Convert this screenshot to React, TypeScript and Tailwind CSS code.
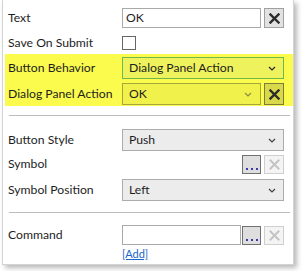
import React from "react";

const XIcon = ({ color = "#2b2b2b", w = 2.4 }: { color?: string; w?: number }) => (
  <svg width="11" height="11" viewBox="0 0 11 11">
    <path d="M1.5 1.5 L9.5 9.5 M9.5 1.5 L1.5 9.5" stroke={color} strokeWidth={w} strokeLinecap="square" />
  </svg>
);

const Chevron = ({ color = "#404040" }: { color?: string }) => (
  <svg width="8" height="5" viewBox="0 0 8 5">
    <path d="M1 1 L4 4 L7 1" stroke={color} strokeWidth="1.2" fill="none" />
  </svg>
);

const Dots = () => (
  <div className="w-[19px] h-[19px] border border-[#707070] bg-[#dedede] flex items-end justify-center pb-[3px] gap-[3px]">
    <span className="w-[2px] h-[2px] bg-[#3a3aa8]" />
    <span className="w-[2px] h-[2px] bg-[#3a3aa8]" />
    <span className="w-[2px] h-[2px] bg-[#3a3aa8]" />
  </div>
);

const DisabledX = () => (
  <div className="w-[20px] h-[19px] border border-[#cfcfcf] bg-[#f4f4f4] flex items-center justify-center">
    <XIcon color="#c4c4c4" w={2} />
  </div>
);

const Label = ({ children }: { children: React.ReactNode }) => (
  <div className="w-[119px] pl-[5px] shrink-0 leading-none">{children}</div>
);

export default function App() {
  return (
    <div
      className="w-[305px] h-[271px] bg-white text-[12.2px] text-[#1e1e1e] overflow-hidden"
      style={{ fontFamily: 'Lato, "Noto Sans", sans-serif' }}
    >
      <div className="ml-[2px] w-[292px] h-[265px] border-l border-r border-b border-[#d4d4d4] bg-white shadow-[3px_3px_5px_rgba(0,0,0,0.28)] pt-[8px]">
        {/* Text */}
        <div className="flex items-center h-[20px]">
          <Label>Text</Label>
          <div className="w-[139px] h-[20px] border border-[#a9a9a9] bg-white flex items-center pl-[3px]">OK</div>
          <div className="ml-[3px] w-[20px] h-[20px] border border-[#a0a0a0] bg-[#e2e2e2] flex items-center justify-center">
            <XIcon />
          </div>
        </div>
        {/* Save On Submit */}
        <div className="flex items-center h-[20px] mt-[5px]">
          <Label>Save On Submit</Label>
          <div className="w-[14px] h-[14px] border border-[#666] bg-white" />
        </div>
        {/* Highlighted */}
        <div className="mt-[1px] ml-[2px] h-[52px] bg-[#fbfb4e] pt-[3px]">
          <div className="flex items-center h-[22px] -ml-[2px]">
            <Label>Button Behavior</Label>
            <div className="w-[162px] h-[22px] border border-[#70b84a] bg-[#eef25c] flex items-center justify-between pl-[6px] pr-[7px]">
              <span>Dialog Panel Action</span>
              <Chevron color="#222" />
            </div>
          </div>
          <div className="flex items-center h-[22px] mt-[4px] -ml-[2px]">
            <Label>Dialog Panel Action</Label>
            <div className="w-[139px] h-[22px] border border-[#a6a63c] bg-[#f1f14c] flex items-center justify-between pl-[6px] pr-[8px]">
              <span>OK</span>
              <Chevron color="#8a8a40" />
            </div>
            <div className="ml-[3px] w-[20px] h-[22px] border border-[#7c7c3c] bg-[#d8d84a] flex items-center justify-center">
              <XIcon />
            </div>
          </div>
        </div>
        <div className="mt-[9px] ml-[6px] w-[281px] h-px bg-[#bdbdbd]" />
        {/* Button Style */}
        <div className="flex items-center h-[22px] mt-[13px]">
          <Label>Button Style</Label>
          <div className="w-[162px] h-[22px] border border-[#acacac] bg-[#ececec] flex items-center justify-between pl-[6px] pr-[7px]">
            <span>Push</span>
            <Chevron />
          </div>
        </div>
        {/* Symbol */}
        <div className="flex items-center h-[19px] mt-[4px]">
          <Label>Symbol</Label>
          <div className="w-[120px]" />
          <Dots />
          <div className="ml-[3px]">
            <DisabledX />
          </div>
        </div>
        {/* Symbol Position */}
        <div className="flex items-center h-[22px] mt-[5px]">
          <Label>Symbol Position</Label>
          <div className="w-[162px] h-[22px] border border-[#acacac] bg-[#ececec] flex items-center justify-between pl-[6px] pr-[7px]">
            <span>Left</span>
            <Chevron />
          </div>
        </div>
        <div className="mt-[11px] ml-[6px] w-[281px] h-px bg-[#bdbdbd]" />
        {/* Command */}
        <div className="flex items-center h-[20px] mt-[12px]">
          <Label>Command</Label>
          <div className="w-[119px] h-[20px] border border-[#a9a9a9] bg-white" />
          <div className="ml-[1px]">
            <Dots />
          </div>
          <div className="ml-[3px]">
            <DisabledX />
          </div>
        </div>
        <div className="flex mt-[3px]">
          <div className="w-[119px]" />
          <span className="text-[11px] leading-[12px] text-[#1a66cc] underline">[Add]</span>
        </div>
      </div>
    </div>
  );
}
